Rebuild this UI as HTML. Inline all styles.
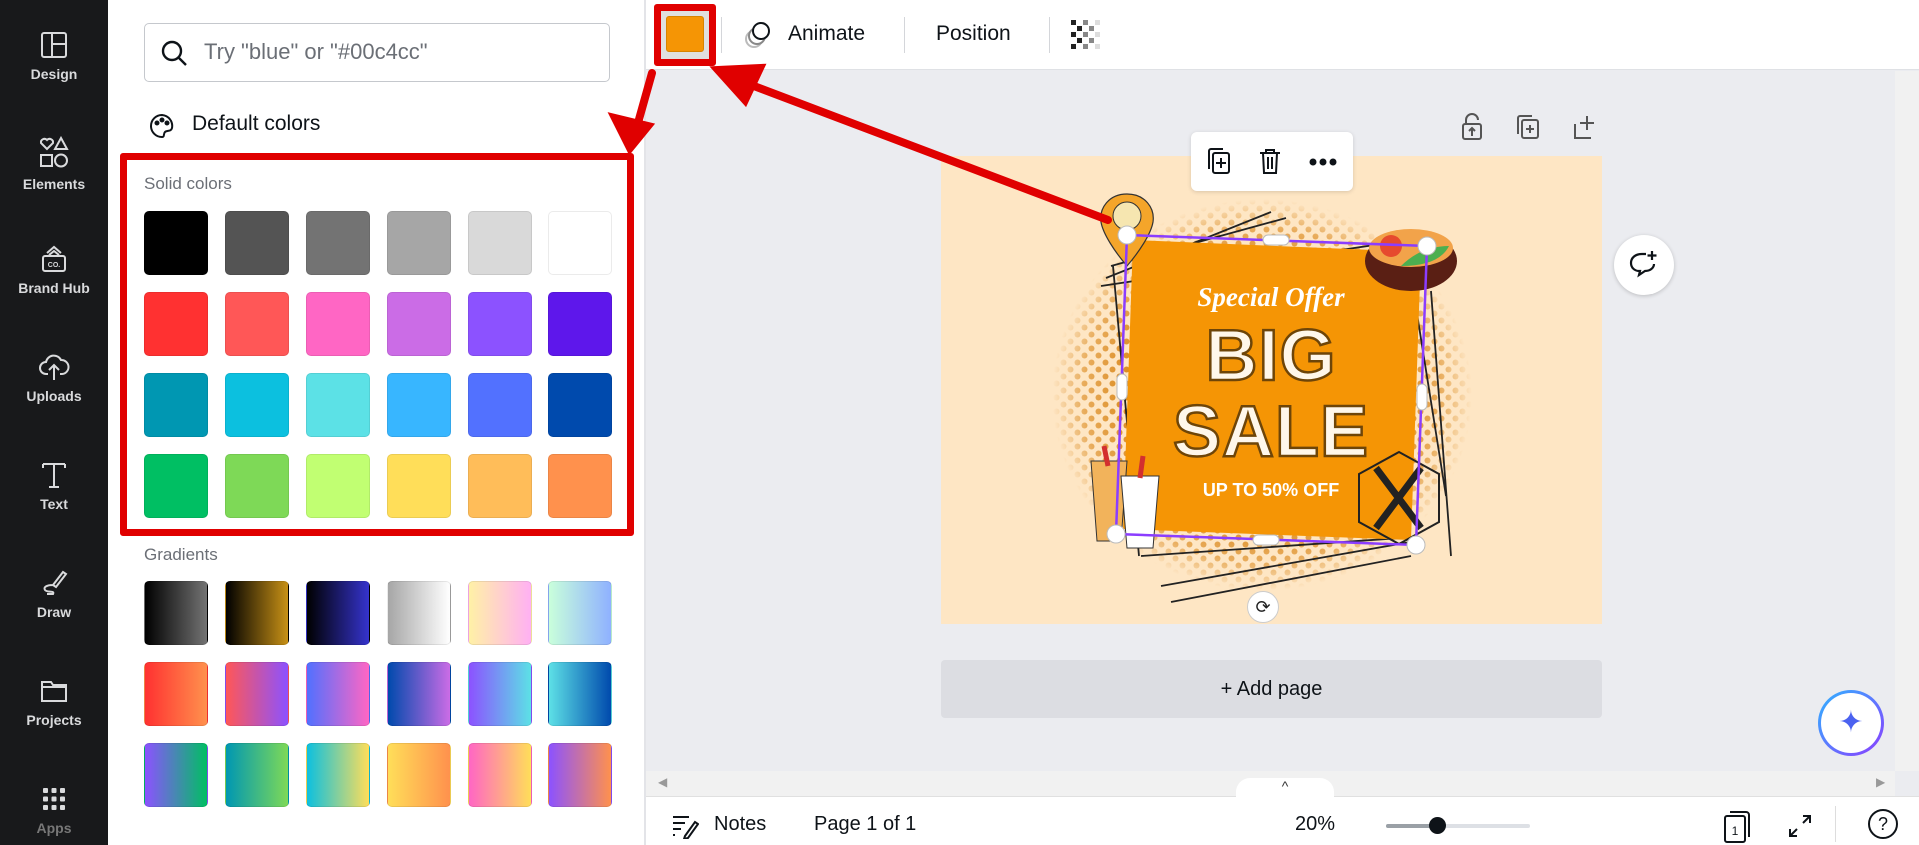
<!DOCTYPE html>
<html><head><meta charset="utf-8"><style>
*{box-sizing:border-box;margin:0;padding:0}
body{width:1919px;height:845px;overflow:hidden;position:relative;font-family:"Liberation Sans",sans-serif;background:#ebecf0}
.abs{position:absolute}
#side{left:0;top:0;width:108px;height:845px;background:#18191b}
.si{position:absolute;left:0;width:108px;text-align:center;color:#d9dadc;font-size:14px;font-weight:bold}
.si svg{display:block;margin:0 auto 6px}
#panel{left:108px;top:0;width:538px;height:845px;background:#fff;border-right:2px solid #e3e4e8}
.sw{position:absolute;width:64px;height:64px;border-radius:5px;border:1px solid rgba(0,0,0,.08)}
.lbl{position:absolute;color:#6b6f76;font-size:17px}
.big{position:absolute;text-align:center;font-weight:bold;color:#fff7ea;-webkit-text-stroke:2.5px #6e4508;letter-spacing:1px}
</style></head><body>
<div id="side" class="abs">
 <div class="si" style="top:30px"><svg width="30" height="30" viewBox="0 0 30 30" fill="none" stroke="#d9dadc" stroke-width="2"><rect x="3" y="3" width="24" height="24" rx="2"/><path d="M13 3v24M13 14h14"/></svg>Design</div>
 <div class="si" style="top:136px"><svg width="32" height="34" viewBox="0 0 32 34" fill="none" stroke="#d9dadc" stroke-width="2"><path d="M9 13 3 7a3.5 3.5 0 0 1 6-3 3.5 3.5 0 0 1 6 3z"/><path d="M23 2l6 11H17z"/><rect x="3" y="19" width="11" height="11"/><circle cx="23" cy="24.5" r="6"/></svg>Elements</div>
 <div class="si" style="top:244px"><svg width="30" height="30" viewBox="0 0 30 30" fill="none" stroke="#d9dadc" stroke-width="2"><rect x="4" y="12" width="22" height="15" rx="2"/><path d="M8 9l7-6 7 6M10 11l5-4 5 4"/><text x="15" y="23" font-size="7" fill="#d9dadc" stroke="none" text-anchor="middle" font-family="Liberation Sans">CO.</text></svg>Brand Hub</div>
 <div class="si" style="top:352px"><svg width="32" height="30" viewBox="0 0 32 30" fill="none" stroke="#d9dadc" stroke-width="2"><path d="M10 22H8a6 6 0 0 1 0-12 8 8 0 0 1 15-2 7 7 0 0 1 1 14h-2"/><path d="M16 28V14M11 18l5-5 5 5"/></svg>Uploads</div>
 <div class="si" style="top:460px"><svg width="30" height="30" viewBox="0 0 30 30" fill="none" stroke="#d9dadc" stroke-width="2"><path d="M4 4h22M4 4v4M26 4v4M15 4v23M10 27h10"/></svg>Text</div>
 <div class="si" style="top:568px"><svg width="30" height="30" viewBox="0 0 30 30" fill="none" stroke="#d9dadc" stroke-width="2"><path d="M14 17 24 4l3 2-10 13zM14 17c-6 0-10 2-8 5s10 0 8 4H8"/></svg>Draw</div>
 <div class="si" style="top:676px"><svg width="30" height="30" viewBox="0 0 30 30" fill="none" stroke="#d9dadc" stroke-width="2"><path d="M3 6h9l2 3h13v16H3z M3 11h24"/></svg>Projects</div>
 <div class="si" style="top:784px;color:#777"><svg width="30" height="30" viewBox="0 0 30 30" fill="#d9dadc"><rect x="4" y="4" width="5" height="5" rx="1"/><rect x="12.5" y="4" width="5" height="5" rx="1"/><rect x="21" y="4" width="5" height="5" rx="1"/><rect x="4" y="12.5" width="5" height="5" rx="1"/><rect x="12.5" y="12.5" width="5" height="5" rx="1"/><rect x="21" y="12.5" width="5" height="5" rx="1"/><rect x="4" y="21" width="5" height="5" rx="1"/><rect x="12.5" y="21" width="5" height="5" rx="1"/><rect x="21" y="21" width="5" height="5" rx="1"/></svg>Apps</div>
</div>
<div id="panel" class="abs">
 <div class="abs" style="left:36px;top:23px;width:466px;height:59px;border:1px solid #c5c8cd;border-radius:5px"></div>
 <svg class="abs" style="left:52px;top:39px" width="30" height="30" viewBox="0 0 30 30" fill="none" stroke="#0e1318" stroke-width="2.4"><circle cx="12" cy="12" r="9"/><path d="M19 19l7 7"/></svg>
 <div class="abs" style="left:96px;top:39px;font-size:22px;color:#6b6f76">Try "blue" or "#00c4cc"</div>
 <svg class="abs" style="left:40px;top:112px" width="28" height="28" viewBox="0 0 28 28" fill="none" stroke="#0e1318" stroke-width="2"><path d="M14 3a11 11 0 1 0 0 22c3 0 1-3 3-5s6 0 7-4A11 11 0 0 0 14 3z"/><circle cx="9" cy="11" r="1.5" fill="#0e1318"/><circle cx="14" cy="8" r="1.5" fill="#0e1318"/><circle cx="19" cy="11" r="1.5" fill="#0e1318"/></svg>
 <div class="abs" style="left:84px;top:112px;font-size:21px;color:#0e1318;font-weight:500">Default colors</div>
 <div class="abs" style="left:12px;top:153px;width:514px;height:383px;border:7px solid #e00000;border-radius:3px"></div>
 <div class="lbl" style="left:36px;top:174px">Solid colors</div>
 <div class="lbl" style="left:36px;top:545px">Gradients</div>
 <div id="sws"></div>
</div>
<!-- top bar -->
<div class="abs" style="left:646px;top:0;width:1273px;height:70px;background:#fff;border-bottom:1px solid #dfe1e5"></div>
<div class="abs" style="left:654px;top:4px;width:62px;height:62px;border:7px solid #e00000;border-radius:3px;background:#e0e0e0"></div>
<div class="abs" style="left:666px;top:16px;width:38px;height:36px;background:#f59505;border-radius:3px;border:1px solid #d88300"></div>
<div class="abs" style="left:721px;top:17px;width:1px;height:36px;background:#d4d6da"></div>
<svg class="abs" style="left:742px;top:18px" width="34" height="34" viewBox="0 0 34 34" fill="none" stroke-width="2"><circle cx="12" cy="21" r="8" stroke="#bbb"/><circle cx="15" cy="18" r="8" stroke="#888" fill="#fff"/><circle cx="19" cy="13" r="8" stroke="#0e1318" fill="#fff"/></svg>
<div class="abs" style="left:788px;top:22px;font-size:21px;color:#0e1318">Animate</div>
<div class="abs" style="left:904px;top:17px;width:1px;height:36px;background:#d4d6da"></div>
<div class="abs" style="left:936px;top:22px;font-size:21px;color:#0e1318">Position</div>
<div class="abs" style="left:1049px;top:17px;width:1px;height:36px;background:#d4d6da"></div>
<svg class="abs" style="left:1071px;top:20px" width="30" height="30" viewBox="0 0 30 30"><g fill="#222"><rect x="0" y="0" width="5" height="5"/><rect x="0" y="12" width="5" height="5"/><rect x="0" y="24" width="5" height="5"/><rect x="6" y="6" width="5" height="5"/><rect x="6" y="18" width="5" height="5"/></g><g fill="#888"><rect x="12" y="0" width="5" height="5"/><rect x="12" y="12" width="5" height="5"/><rect x="12" y="24" width="5" height="5"/><rect x="18" y="6" width="5" height="5"/><rect x="18" y="18" width="5" height="5"/></g><g fill="#ddd"><rect x="24" y="0" width="5" height="5"/><rect x="24" y="12" width="5" height="5"/><rect x="24" y="24" width="5" height="5"/></g></svg>
<div class="abs" style="left:1895px;top:71px;width:24px;height:700px;background:#f1f1f1"></div>
<svg class="abs" style="left:1460px;top:112px" width="150" height="30" viewBox="0 0 150 30" fill="none" stroke="#555" stroke-width="2"><rect x="3" y="12" width="18" height="15" rx="2"/><path d="M6 12V8a6 6 0 0 1 12 0M12 24v-7M9 19l3-3 3 3"/><rect x="62" y="8" width="16" height="18" rx="2"/><path d="M58 22V6a2 2 0 0 1 2-2h12M70 13v8M66 17h8"/><path d="M115 12v14h16M127 4v14M120 11h14"/></svg>
<!-- page -->
<div class="abs" style="left:941px;top:156px;width:661px;height:468px;background:#fee6c4;overflow:hidden">
<svg width="661" height="468" viewBox="0 0 661 468">
 <defs>
  <pattern id="dp" width="14" height="14" patternUnits="userSpaceOnUse"><circle cx="3.5" cy="3.5" r="3" fill="#d98516"/><circle cx="10.5" cy="10.5" r="3" fill="#d98516"/></pattern>
  <radialGradient id="rg" cx="0.5" cy="0.5" r="0.5"><stop offset="0.6" stop-color="#fff"/><stop offset="0.85" stop-color="#fff" stop-opacity=".6"/><stop offset="1" stop-color="#fff" stop-opacity="0"/></radialGradient>
  <mask id="mk"><ellipse cx="321" cy="239" rx="210" ry="196" fill="url(#rg)"/></mask>
 </defs>
 <rect x="100" y="30" width="450" height="420" fill="url(#dp)" mask="url(#mk)"/>
 <g fill="none" stroke="#222" stroke-width="1.8">
  <path d="M165 122 L330 56 M170 110 L345 62 M160 130 L480 82"/>
  <path d="M490 135 L510 400 M470 120 L505 340"/>
  <path d="M230 446 L470 400 M220 430 L475 385 M200 400 L460 382"/>
  <path d="M172 110 L198 400"/>
 </g>
 <polygon points="192,84 480,96 470,384 182,373" fill="#f59505"/>
 <path d="M186 38c-18 0-28 14-26 28 2 12 14 30 26 44 12-14 24-32 26-44 2-14-8-28-26-28z" fill="#f4a52a" stroke="#333" stroke-width="1.2"/>
 <circle cx="186" cy="60" r="14" fill="#f6e6b0" stroke="#333"/>
 <ellipse cx="470" cy="105" rx="46" ry="30" fill="#5a1f14"/>
 <ellipse cx="470" cy="92" rx="42" ry="19" fill="#f2a34a"/>
 <circle cx="450" cy="90" r="11" fill="#e64a2e"/>
 <path d="M460 110 q20-20 48-20 q-10 20-48 20z" fill="#4caf50"/>
 <path d="M150 305 l36 0 -6 80 -24 0z" fill="#f2b35b" stroke="#333"/>
 <path d="M163 290 l4 20" stroke="#d32f2f" stroke-width="5"/>
 <path d="M180 320 l38 0 -6 72 -26 0z" fill="#fff" stroke="#333"/>
 <path d="M202 300 l-3 22" stroke="#d32f2f" stroke-width="5"/>
 <path d="M418 318 l40 -22 40 22 0 48 -40 22 -40 -22z" fill="none" stroke="#222" stroke-width="2"/>
 <path d="M435 312 l45 60 M480 312 l-45 60" stroke="#222" stroke-width="7"/>
 <polygon points="186,79 486,90 475,389 175,378" fill="none" stroke="#8b3dff" stroke-width="2.5"/>
 <g fill="#fff" stroke="#bbb" stroke-width="1">
  <circle cx="186" cy="79" r="9"/><circle cx="486" cy="90" r="9"/><circle cx="175" cy="378" r="9"/><circle cx="475" cy="389" r="9"/>
  <rect x="322" y="79" width="26" height="10" rx="5"/><rect x="312" y="379" width="26" height="10" rx="5"/>
  <rect x="176" y="218" width="10" height="26" rx="5"/><rect x="476" y="228" width="10" height="26" rx="5"/>
 </g>
</svg>
 <div class="abs" style="left:235px;top:126px;width:190px;text-align:center;font-family:'Liberation Serif',serif;font-style:italic;font-size:27px;color:#fff;font-weight:bold">Special Offer</div>
 <div class="big" style="left:180px;top:160px;width:300px;font-size:72px;line-height:80px">BIG</div>
 <div class="big" style="left:170px;top:236px;width:320px;font-size:72px;line-height:80px">SALE</div>
 <div class="abs" style="left:220px;top:324px;width:220px;text-align:center;font-size:18px;font-weight:bold;color:#fff">UP TO 50% OFF</div>
</div>
<svg class="abs" style="left:0;top:0" width="1919" height="845"><g stroke="#e00000" stroke-width="8" fill="#e00000" stroke-linecap="round"><path d="M1108 220 L738 80"/><path d="M718 70 L760 68 L745 100z"/><path d="M652 73 L636 130"/><path d="M630 148 L615 118 L648 126z"/></g></svg>
<div class="abs" style="left:1191px;top:132px;width:162px;height:59px;background:#fff;border-radius:6px;box-shadow:0 1px 4px rgba(0,0,0,.15)"></div>
<svg class="abs" style="left:1206px;top:147px" width="135" height="30" viewBox="0 0 135 30" fill="none" stroke="#0e1318" stroke-width="2"><rect x="7" y="6" width="16" height="20" rx="2"/><path d="M3 22V4a2 2 0 0 1 2-2h12M15 11v10M10 16h10"/><path d="M54 6h20M60 6V3h8v3M57 6l1 20h12l1-20M62 10v12M66 10v12"/><circle cx="107" cy="15" r="2.5" fill="#0e1318"/><circle cx="117" cy="15" r="2.5" fill="#0e1318"/><circle cx="127" cy="15" r="2.5" fill="#0e1318"/></svg>
<div class="abs" style="left:1614px;top:235px;width:60px;height:60px;border-radius:50%;background:#fff;box-shadow:0 1px 4px rgba(0,0,0,.2)"></div>
<svg class="abs" style="left:1628px;top:250px" width="32" height="30" viewBox="0 0 32 30" fill="none" stroke="#0e1318" stroke-width="2.2"><path d="M18 4H14C7 4 3 8 3 13s4 8 8 8h1l-1 4 6-4c5 0 9-3 9-7"/><path d="M24 1v9M19.5 5.5h9"/></svg>
<div class="abs" style="left:1247px;top:591px;width:32px;height:32px;border-radius:50%;background:#fff;border:1px solid #ccc;text-align:center;line-height:30px;font-size:18px;color:#222">⟳</div>
<div class="abs" style="left:941px;top:660px;width:661px;height:58px;background:#dcdde2;border-radius:4px;text-align:center;line-height:58px;font-size:20px;color:#0e1318">+ Add page</div>
<div class="abs" style="left:1818px;top:690px;width:66px;height:66px;border-radius:50%;background:linear-gradient(135deg,#2fb4ff,#8b3dff);padding:3px"><div style="width:60px;height:60px;border-radius:50%;background:#fff;text-align:center;line-height:60px;font-size:30px;color:#4b62f0">✦</div></div>
<div class="abs" style="left:646px;top:771px;width:1249px;height:25px;background:#f1f1f1"></div>
<div class="abs" style="left:658px;top:775px;font-size:12px;color:#999">◀</div>
<div class="abs" style="left:1876px;top:775px;font-size:12px;color:#999">▶</div>
<div class="abs" style="left:646px;top:796px;width:1273px;height:49px;background:#fff;border-top:1px solid #e0e0e0"></div>
<div class="abs" style="left:1236px;top:778px;width:98px;height:20px;background:#fff;border-radius:14px 14px 0 0;text-align:center;font-size:14px;color:#333">^</div>
<svg class="abs" style="left:671px;top:813px" width="28" height="26" viewBox="0 0 28 26" fill="none" stroke="#0e1318" stroke-width="2"><path d="M2 4h16M2 10h12M2 16h8M2 22h2M14 23l10-14 3 2-10 14-4 1z"/></svg>
<div class="abs" style="left:714px;top:813px;font-size:20px;color:#0e1318">Notes</div>
<div class="abs" style="left:814px;top:813px;font-size:20px;color:#0e1318">Page 1 of 1</div>
<div class="abs" style="left:1295px;top:813px;font-size:20px;color:#0e1318">20%</div>
<div class="abs" style="left:1386px;top:824px;width:144px;height:4px;background:#dde0e5;border-radius:2px"></div>
<div class="abs" style="left:1386px;top:824px;width:50px;height:4px;background:#9aa0a6;border-radius:2px"></div>
<div class="abs" style="left:1429px;top:817px;width:17px;height:17px;border-radius:50%;background:#0e1318"></div>
<svg class="abs" style="left:1722px;top:808px" width="30" height="36" viewBox="0 0 30 36" fill="none" stroke="#0e1318" stroke-width="2"><rect x="3" y="8" width="20" height="26" rx="2"/><path d="M8 4h16a3 3 0 0 1 3 3v22"/><text x="13" y="27" font-size="12" fill="#0e1318" stroke="none" text-anchor="middle" font-family="Liberation Sans">1</text></svg>
<svg class="abs" style="left:1786px;top:812px" width="28" height="28" viewBox="0 0 28 28" fill="none" stroke="#0e1318" stroke-width="2"><path d="M17 4h7v7M24 4l-7 7M11 24H4v-7M4 24l7-7"/></svg>
<div class="abs" style="left:1835px;top:806px;width:1px;height:36px;background:#ddd"></div>
<div class="abs" style="left:1868px;top:809px;width:30px;height:30px;border-radius:50%;border:2px solid #0e1318;text-align:center;line-height:27px;font-size:18px;color:#0e1318">?</div>
<script>
var solid=[["#000","#545454","#737373","#a6a6a6","#d9d9d9","#fff"],["#ff3131","#ff5757","#ff66c4","#cb6ce6","#8c52ff","#5e17eb"],["#0097b2","#0cc0df","#5ce1e6","#38b6ff","#5271ff","#004aad"],["#00bf63","#7ed957","#c1ff72","#ffde59","#ffbd59","#ff914d"]];
var grad=[[["#000","#737373"],["#000","#c89116"],["#000","#3533cd"],["#a6a6a6","#fff"],["#fff1a6","#ffb0f3"],["#c9ffdb","#8fb1ff"]],[["#ff3131","#ff914d"],["#ff5757","#8c52ff"],["#5170ff","#ff66c4"],["#004aad","#cb6ce6"],["#8c52ff","#5ce1e6"],["#5de0e6","#004aad"]],[["#8c52ff","#00bf63"],["#0097b2","#7ed957"],["#0cc0df","#ffde59"],["#ffde59","#ff914d"],["#ff66c4","#ffde59"],["#8c52ff","#ff914d"]]];
var xs=[36,117,198,279,360,440],h="";
solid.forEach(function(r,i){r.forEach(function(c,j){h+='<div class="sw" style="left:'+xs[j]+'px;top:'+(211+i*81)+'px;background:'+c+'"></div>'})});
grad.forEach(function(r,i){r.forEach(function(c,j){h+='<div class="sw" style="left:'+xs[j]+'px;top:'+(581+i*81)+'px;background:linear-gradient(90deg,'+c[0]+','+c[1]+')"></div>'})});
document.getElementById("sws").innerHTML=h;
</script>
</body></html>
